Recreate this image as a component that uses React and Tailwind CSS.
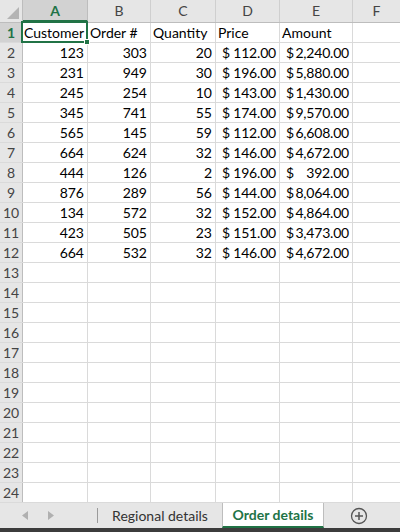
import React from 'react';

const cols = [
  { key: 'A', w: 'w-[65px]' },
  { key: 'B', w: 'w-[63px]' },
  { key: 'C', w: 'w-[65px]' },
  { key: 'D', w: 'w-[64px]' },
  { key: 'E', w: 'w-[73px]' },
  { key: 'F', w: 'flex-1' },
];

const data = [
  [123, 303, 20, '112.00', '2,240.00'],
  [231, 949, 30, '196.00', '5,880.00'],
  [245, 254, 10, '143.00', '1,430.00'],
  [345, 741, 55, '174.00', '9,570.00'],
  [565, 145, 59, '112.00', '6,608.00'],
  [664, 624, 32, '146.00', '4,672.00'],
  [444, 126, 2, '196.00', '392.00'],
  [876, 289, 56, '144.00', '8,064.00'],
  [134, 572, 32, '152.00', '4,864.00'],
  [423, 505, 23, '151.00', '3,473.00'],
  [664, 532, 32, '146.00', '4,672.00'],
];

const Money = ({ v }) => (
  <div className="flex justify-between pl-[6px] pr-[3px] tracking-[-0.2px]">
    <span>$</span>
    <span>{v}</span>
  </div>
);

const Cell = ({ w, children, className = '' }) => (
  <div className={`${w} h-full border-r border-[#dadada] whitespace-nowrap ${className}`}>
    {children}
  </div>
);

const Row = ({ n }) => {
  const d = n >= 2 && n <= 12 ? data[n - 2] : null;
  return (
    <div className="flex h-[20px] border-b border-[#dadada] leading-[20px]">
      <div
        className={`w-[23px] h-full border-r border-[#bdbdbd] text-center ${
          n === 1 ? 'bg-[#d2d2d2] text-[#217346] font-bold' : 'bg-[#e6e6e6] text-[#444]'
        }`}
      >
        {n}
      </div>
      {n === 1 ? (
        <>
          <Cell w="w-[65px]" className="relative">
            <div className="absolute -left-[2px] -top-[2px] w-[67px] h-[22px] border-2 border-[#217346] z-10" />
            <div className="absolute -right-[3px] -bottom-[3px] w-[6px] h-[6px] bg-[#217346] border border-white z-20" />
            <span className="pl-[1px] relative">Customer</span>
          </Cell>
          <Cell w="w-[63px]" className="pl-[2px]">Order #</Cell>
          <Cell w="w-[65px]" className="pl-[2px]">Quantity</Cell>
          <Cell w="w-[64px]" className="pl-[2px]">Price</Cell>
          <Cell w="w-[73px]" className="pl-[2px]">Amount</Cell>
          <Cell w="flex-1" className="border-r-0" />
        </>
      ) : d ? (
        <>
          <Cell w="w-[65px]" className="text-right pr-[3px]">{d[0]}</Cell>
          <Cell w="w-[63px]" className="text-right pr-[3px]">{d[1]}</Cell>
          <Cell w="w-[65px]" className="text-right pr-[3px]">{d[2]}</Cell>
          <Cell w="w-[64px]"><Money v={d[3]} /></Cell>
          <Cell w="w-[73px]"><Money v={d[4]} /></Cell>
          <Cell w="flex-1" className="border-r-0" />
        </>
      ) : (
        cols.map((c) => <Cell key={c.key} w={c.w} className={c.key === 'F' ? 'border-r-0' : ''} />)
      )}
    </div>
  );
};

export default function App() {
  const rows = Array.from({ length: 24 }, (_, i) => i + 1);
  return (
    <div
      className="w-[400px] h-[532px] bg-white flex flex-col overflow-hidden text-[14px] text-black"
      style={{ fontFamily: 'Lato, "Open Sans", sans-serif' }}
    >
      {/* column headers */}
      <div className="flex h-[23px] bg-[#e6e6e6] border-b border-[#bdbdbd] leading-[22px] text-[#444]">
        <div className="w-[23px] h-full border-r border-[#bdbdbd] relative">
          <svg className="absolute right-[3px] bottom-[3px]" width="12" height="12" viewBox="0 0 12 12">
            <polygon points="12,0 12,12 0,12" fill="#b4b4b4" />
          </svg>
        </div>
        {cols.map((c) => (
          <div
            key={c.key}
            className={`${c.w} h-full text-center ${
              c.key === 'A'
                ? 'bg-[#d2d2d2] text-[#217346] font-bold border-r border-[#bdbdbd] border-b-2 border-b-[#217346]'
                : c.key === 'F'
                ? ''
                : 'border-r border-[#cfcfcf]'
            }`}
          >
            {c.key}
          </div>
        ))}
      </div>

      {rows.map((n) => (
        <Row key={n} n={n} />
      ))}

      {/* sheet tabs */}
      <div className="flex-1 flex items-stretch bg-[#e6e6e6] border-b-[4px] border-[#3c3c3c]">
        <div className="w-[98px] flex items-center border-r border-[#9a9a9a] my-[5px] pl-[22px] gap-[20px]">
          <svg width="6" height="9" viewBox="0 0 6 9">
            <polygon points="6,0 6,9 0,4.5" fill="#b0b0b0" />
          </svg>
          <svg width="6" height="9" viewBox="0 0 6 9">
            <polygon points="0,0 0,9 6,4.5" fill="#b0b0b0" />
          </svg>
        </div>
        <div className="w-[124px] flex items-center justify-center text-[#333]">Regional details</div>
        <div className="w-[102px] flex items-center justify-center bg-white text-[#217346] font-bold border-x border-[#bdbdbd] border-b-2 border-b-[#217346]">
          Order details
        </div>
        <div className="flex-1 flex items-center justify-center pr-[6px]">
          <svg width="18" height="18" viewBox="0 0 18 18">
            <circle cx="9" cy="9" r="7.5" fill="none" stroke="#555" strokeWidth="1.3" />
            <line x1="9" y1="5" x2="9" y2="13" stroke="#555" strokeWidth="1.5" />
            <line x1="5" y1="9" x2="13" y2="9" stroke="#555" strokeWidth="1.5" />
          </svg>
        </div>
      </div>
    </div>
  );
}
